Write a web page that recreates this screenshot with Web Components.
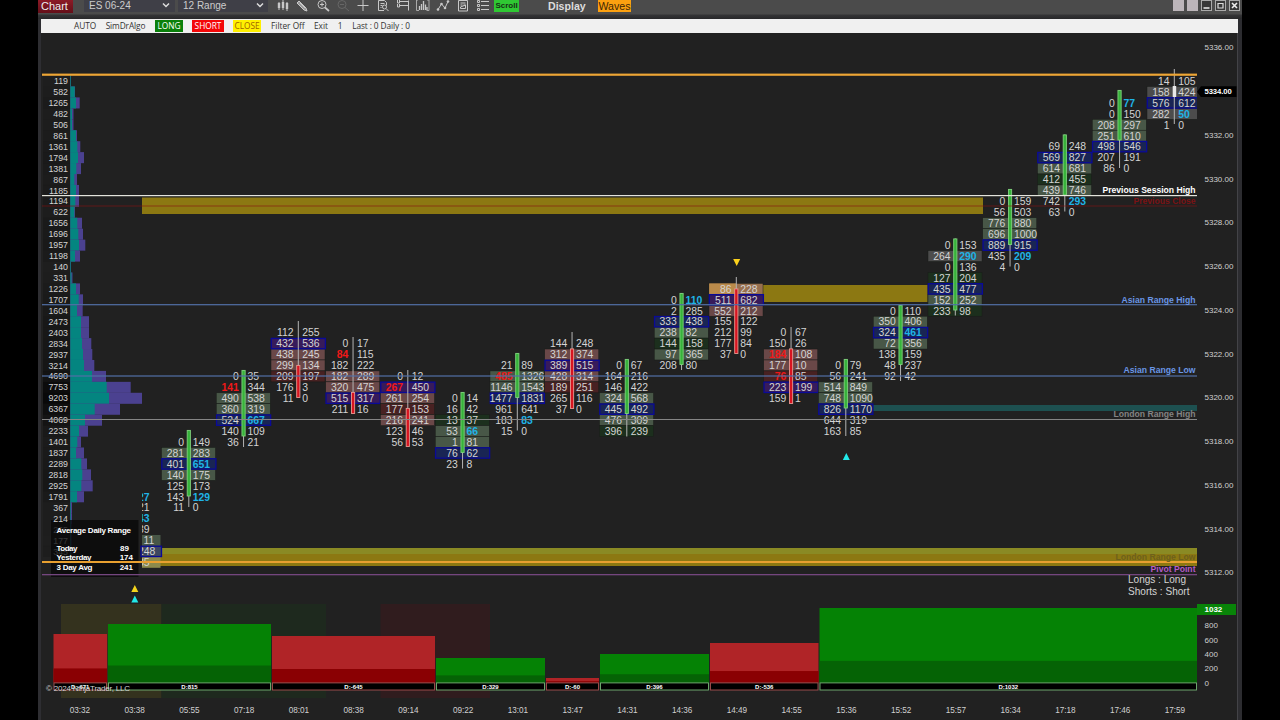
<!DOCTYPE html>
<html lang="en"><head><meta charset="utf-8"><title>Chart - ES 06-24</title>
<style>
html,body{margin:0;height:100%;background:#000;overflow:hidden}
body{font-family:"Liberation Sans",Arial,sans-serif;color:#d2d2d2}
</style></head><body>
<chart-window>
  <title-bar slot="title"></title-bar>
  <order-strip slot="orders"></order-strip>
  <footprint-chart slot="chart"></footprint-chart>
  <price-axis slot="axis"></price-axis>
  <time-axis slot="time"></time-axis>
</chart-window>
<script>
const def=(name,html,init)=>customElements.define(name,class extends HTMLElement{
  constructor(){super();this.attachShadow({mode:'open'}).innerHTML=html;if(init)init(this.shadowRoot);}
});

def('chart-window',`<style>
:host{display:grid;box-sizing:border-box;width:1204px;height:720px;margin-left:38px;background:#212121;
 grid-template-columns:1159px 41px 4px;grid-template-rows:19px 15px 666px 20px;box-shadow:inset 3px 0 #2e2e32,inset -4px 0 #2c2c30,inset -5px 0 #434347}
.wide{grid-column:1/4;min-width:0}.c{padding-left:4px}
</style><div class="wide"><slot name="title"></slot></div><div class="wide"><slot name="orders"></slot></div>
<div class="c"><slot name="chart"></slot></div><div><slot name="axis"></slot></div><i></i><div class="wide"><slot name="time"></slot></div>`);

def('tool-icon',`<style>:host{display:block;width:20px;height:12px;flex:none}svg{display:block;margin:auto}</style><svg width="14" height="12" viewBox="0 0 14 12" fill="none" stroke="#c8c8c8"></svg>`,root=>{
 const I={
 bars:'<path d="M3 2v8M7 0v10M11 2v9" stroke-width="1"/><path d="M3 3v5M7 2v6M11 3v6" stroke-width="2.4"/>',
 pencil:'<path d="M3 1l7 7 1 3-3-1-7-7z" fill="#999"/><path d="M4 3l5 5"/>',
 zin:'<circle cx="6" cy="4.5" r="4"/><path d="M9 7.500l4 3.500" stroke-width="1.700"/><path d="M4 4.500h4M6 2.500v4"/>',
 zout:'<g stroke="#676767"><circle cx="6" cy="4.500" r="4"/><path d="M9 7.500l4 3.500M4 4.500h4"/></g>',
 cross:'<path d="M7 0v11M1.500 5.500h11"/>',
 doc:'<path d="M8 10.500H2.500V.5h6l2 2v3M4.500 3.500h4M4.500 5.500h2M4.500 7.500h1"/><circle cx="8.500" cy="7" r="2"/><path d="M10 8.500l2.500 2.500"/>',
 ruler:'<path d="M12.500 10.500V.5M3 1.500h9M3 5.500h9M1.500 0v3h2V0M1.500 4v3h2V4"/>',
 hist:'<path d="M2 0H.5v10.500H3M11 0h2v10.500h-2.500" stroke="#aaa"/><path d="M3.500 10V6M5.500 10V4M7.500 10V1M9.500 10V4.500M11 10V7" stroke-width="1.300"/>',
 zig:'<path d="M2 9.500L5.500 4l3.500 4 3-6.500"/><g fill="#c8c8c8" stroke="none"><circle cx="2" cy="9.500" r="1.300"/><circle cx="5.500" cy="4" r="1.300"/><circle cx="9" cy="8" r="1.300"/><circle cx="12" cy="1.500" r="1.300"/></g>',
 props:'<path d="M2.500 .5h9v10.500h-9zM4.500 3h5M4.500 5h2M7.500 5h2v3.500h-5V7l5-2"/>',
 list:'<path d="M5 1.500h8M5 5.500h8M5 9.500h8"/><path d="M1.500 .5h2v2h-2zM1.500 4.500h2v2h-2zM1.500 8.500h2v2h-2z"/>'};
 queueMicrotask(()=>{root.querySelector('svg').innerHTML=I[root.host.getAttribute('name')]});
});

def('title-bar',`<style>
:host{display:flex;height:19px;background:linear-gradient(#4b4b4b 0 14px,#343436 15px,#28282a 19px);font-size:10.5px;line-height:12px;align-items:flex-start}
.tab{width:35px;height:13px;background:linear-gradient(#8c1a26,#640f19);color:#eee;padding-left:3px;box-sizing:border-box;font-size:11px}
.sel{display:flex;justify-content:space-between;height:12px;box-sizing:border-box;background:#3f3f47;color:#ccc;padding:0 5px;font-size:10px}
.sel svg{margin-top:2px}.icons{display:flex;margin-left:5px}
.scroll{width:25px;height:12px;margin-left:1px;background:#2fc833;color:#153015;font-weight:bold;font-size:8px;text-align:center}
.disp{font-weight:bold;font-size:10.600px;margin-left:29px;width:37px;color:#ddd}
.waves{font-size:10.600px;margin-left:13px;width:33px;background:#fba010;color:#3b2606;text-align:center}
.btns{display:flex;gap:3px;margin:0 2px 0 auto}.b{width:11px;height:11px;background:#bcb5ba}
.w{background:#383838;box-sizing:border-box;border:1px solid #aaa}.w svg{display:block}
</style><div class="tab">Chart</div>
<div class="sel" style="margin-left:11px;width:91px">ES 06-24<svg width="8" height="7" fill="none" stroke="#ddd" stroke-width="1.500"><path d="M1 1.500l3 3 3-3"/></svg></div>
<div class="sel" style="margin-left:3px;width:90px;padding-right:4px">12 Range<svg width="8" height="7" fill="none" stroke="#ddd" stroke-width="1.500"><path d="M1 1.500l3 3 3-3"/></svg></div>
<div class="icons">${['bars','pencil','zin','zout','cross','doc','ruler','hist','zig','props','list'].map(n=>`<tool-icon name="${n}"></tool-icon>`).join('')}</div>
<div class="scroll">Scroll</div><div class="disp">Display</div><div class="waves">Waves</div>
<div class="btns"><div class="b"></div><div class="b"></div>
<div class="b w"><svg width="9" height="9"><path d="M1.500 7h6" stroke="#eee" stroke-width="1.500"/></svg></div>
<div class="b w"><svg width="9" height="9"><path d="M2 2.500h5v4.500h-5z" fill="none" stroke="#ddd" stroke-width="1.200"/></svg></div>
<div class="b w"><svg width="9" height="9"><path d="M2 2l5 5M7 2l-5 5" stroke="#eee" stroke-width="1.600"/></svg></div></div>`);

def('order-strip',`<style>
:host{display:flex;align-items:center;height:14px;margin:0 4px 0 3px;background:#f0f0f0;color:#333;font:8.3px/11px "Open Sans","Noto Sans",sans-serif;white-space:nowrap}
span{flex:none;box-sizing:border-box;text-align:center;margin-right:9px;height:12px}
</style><span style="width:22px;margin-left:33px">AUTO</span><span style="width:41px;letter-spacing:-.1px">SimDrAlgo</span>
<span style="width:28px;background:#0a800a;color:#fff">LONG</span><span style="width:32px;background:#f30808;color:#fff">SHORT</span>
<span style="width:28px;background:#fff000;color:#a06000;margin-right:10px">CLOSE</span><span style="width:33px;margin-right:10px">Filter Off</span>
<span style="width:14px">Exit</span><span style="width:6px">1</span><span style="width:58px;letter-spacing:-.1px">Last : 0 Daily : 0</span>`);

def('price-axis',`<style>
:host{display:flex;flex-direction:column;height:666px;font-size:8px;color:#d0d0d0;overflow:hidden}
.p{flex:none;height:43.75px;display:flex;align-items:center}.p:first-of-type{margin-top:-7.900px}
.p span,.v span{padding-left:7.500px}.p.cur span{background:#000;color:#fff;font-weight:bold;font-size:7.700px;line-height:11px;width:32px;letter-spacing:-.1px;clip-path:polygon(0 50%,4px 0,100% 0,100% 100%,4px 100%)}
.v{height:14.350px;flex:none;display:flex;align-items:center}
.v.flag{height:11px;margin-top:9.200px;margin-bottom:3.500px;width:39px;background:#088408;color:#fff;font-weight:bold}
</style>${Array.from({length:13},(_,i)=>`<div class="p${i==1?' cur':''}"><span>${5336-2*i}.00</span></div>`).join('')}
<div class="v flag"><span>1032</span></div>${[800,600,400,200,0].map(n=>`<div class="v"><span>${n}</span></div>`).join('')}`);

def('time-axis',`<style>
:host{display:flex;height:20px;padding-left:14.500px;font-size:8.200px;color:#d0d0d0}
span{width:54.750px;flex:none;text-align:center;line-height:21px}
</style>${'03:32 03:38 05:55 07:18 08:01 08:38 09:14 09:22 13:01 13:47 14:31 14:36 14:49 14:55 15:36 15:52 15:57 16:34 17:18 17:46 17:59'.split(' ').map(t=>`<span>${t}</span>`).join('')}`);

def('footprint-chart',`<style>
:host{display:block;width:1155px;height:666px}
svg{display:block}text{font-family:"Liberation Sans",Arial,sans-serif;fill:#d4d4d4;font-size:10.400px}
.h{fill:#1fb4e8;font-weight:bold}.s{fill:#f01818;font-weight:bold}
.vp{font-size:8.800px}.lb{font-weight:bold;font-size:9px}.ad{font-weight:bold;font-size:8px;fill:#fff}.d{font-weight:bold;font-size:6px;fill:#fff}
</style><svg width="1155" height="666" viewBox="42 34 1155 666"></svg>`,root=>{
 const P=10.94,Y=i=>81+P*i;let o='';
 const rect=(x,y,x2,y2,f,e='')=>{o+=`<rect x="${x}" y="${y}" width="${+(x2-x).toFixed(2)}" height="${+(y2-y).toFixed(2)}" fill="${f}" ${e}/>`};
 const text=(x,y,t,c='',e='')=>{o+=`<text x="${x}" y="${y}" class="${c}" ${e}>${t}</text>`};
 // price zones
 rect(142,197.5,983,214,'#8c7812');rect(763,285,927.5,302,'#8c7812');rect(819,405,1197,411,'#1d5050');
 rect(142,548,1197,554,'#8a8a24');rect(142,554,1197,566,'#8c7812');
 // volume profile: label, bid edge, total edge
 const V=[[119,71,71],[582,74.700,75],[1265,76,79.700],[482,72,73.500],[506,72,73.500],[861,76,77],[1361,77.300,80.300],[1794,78,84],[1381,76.300,81],[867,74.300,77],[1185,76,79],[1194,75.300,79],[622,74.300,75],[1656,77.300,82],[1696,78.300,83],[1957,79,85.300],[1198,75,80],[140,71,71],[331,71.500,72.500],[1226,76,80],[1707,78.700,83],[1604,77,82.700],[2473,81,89],[2403,81,89],[2834,82,91.300],[2937,83,92.300],[3214,84,94.300],[4690,92,106],[7753,106.700,130.700],[9203,109,142],[6367,94.700,120],[4069,85,102],[2233,79,88],[1401,77.300,81],[1837,76,84],[2289,81.300,87],[2818,82.300,91],[2925,81.300,92.700],[1791,77,84],[367,71,72],[214,71,72],[265,71,71.500],[177,71,71.500],[345,71,71.500]];
 V.forEach(([n,a,b],i)=>{const y=Y(i)-5.47;
  rect(43,y,70,y+P+.1,'#000',`opacity="${(.08+Math.min(n/9203,1)*.65).toFixed(2)}"`);
  rect(70.3,y,b,y+P+.1,'#4b4190');rect(70.3,y,a,y+P+.1,'#048580');
  if(n!==214)text(68,Y(i)+3.1,n,'vp','text-anchor="end"')});
 // footprint columns: first row, bid/ask/shade, body colour, wick span, body span
 const C=[
 [33,'0/149 281/283g 401/651*b 140/175g 125/173 143/129* 11/0','G',430,507,430,496],
 [27,'0/35 !141/344 490/538g 360/319g 524/667*b 140/109 36/21','G',370,447,370,436],
 [23,'112/255 432/536p 438/245r 299/134r 209/197q 176/3 11/0','R',321,397,365,397.500],
 [24,'0/17 !84/115 182/222 182/289r 320/475r 515/317p 211/16','R',337,413,392,413.500],
 [27,'0/12 !267/450p 261/254r 177/153q 216/241r 123/46 56/53','R',370,446,408,446.500],
 [29,'0/14 16/42 13/37k 53/66*g 1/81g 76/62b 23/8','G',392,468.500,392,452.500],
 [26,'21/89 !485/1326g 1146/1543g 1477/1831b 961/641 183/83* 15/0','G',353,430.500,353,397.500],
 [24,'144/248 312/374r 389/515p 428/314r 189/251q 265/116 37/0','R',332,408,348.500,408.500],
 [26,'0/67 164/216 146/422 324/568g 445/492b 476/309g 396/239k','G',359,436.500,359,413.500],
 [20,'0/110* 2/285 333/438b 238/82g 144/158k 97/365g 208/80','G',293,370,293,364.500],
 [19,'86/228o 511/682p 552/212r 155/122 212/99 177/84 37/0','R',277,353,288.500,353.500],
 [23,'0/67 150/26 !184/108r 177/10r !76/85q 223/199p 159/1','R',327,403,348.500,403.500],
 [26,'0/79 56/241 514/849g 748/1090g 826/1170b 644/319 163/85','G',359,436,359,408],
 [21,'0/110 350/406g 324/461*b 72/356g 138/159 48/237 92/42','G',305,381,305,364.500],
 [15,'0/153 264/290*y 0/136 127/204k 435/477b 152/252g 233/98k','G',238.500,315.500,238.500,310],
 [11,'0/159 56/503 776/880g 696/1000g 889/915b 435/209* 4/0','G',189,266.500,189,244.500],
 [6,'69/248 569/827b 614/681g 412/455k 439/746g 742/293* 63/0','G',134.500,211.500,134.500,195],
 [2,'0/77* 0/150 208/297g 251/610g 498/546b 207/191 86/0','G',90,168,90,140],
 [0,'14/105 158/424y 576/612b 282/50*y 1/0','W',69,124,86,97]];
 const S={g:'#485747',k:'#1c2f1d',r:'#6a4848',q:'#482122',b:'#192554',p:'#371b5b',y:'#4c4c4c',o:'#98704f'};
 C.forEach(([r,d,kind,w1,w2,b1,b2],n)=>{
  const x=+(188.7+54.75*n).toFixed(2),rows=d.split(' ').map(t=>/^(!?)(\d+)\/(\d+)(\*?)(\w?)$/.exec(t));
  for(const pass of [0,1])rows.forEach((m,i)=>{const f=m[5],blue=f=='b'||f=='p';if(!f||blue!=!!pass)return;const y=Y(r+i)-5.47;
   if(blue)rect(x-26.9,y+.3,x+27.2,y+P-.3,S[f],'stroke="#0a0a98" stroke-width="1.300"');
   else{rect(x-27.2,y,x+26.800,y+P,S[f],'stroke="#191c19" stroke-width=".5"');if(f=='o')rect(x-27,y,x,y+P,'#ba8a4a')}});
  rows.forEach((m,i)=>{const y=+(Y(r+i)+3.8).toFixed(2);
   text(+(x-4.6).toFixed(2),y,m[2],m[1]?'s':'','text-anchor="end"');text(+(x+4).toFixed(2),y,m[3],m[4]?'h':'')});
  rect(x-.4,w1,x+.6,w2,'#b4b4b4');
  if(kind=='W')rect(x-1.5,b1,x+2,b2,'#e8e8e8');
  else rect(x-1.5,b1+.4,x+1.7,b2,kind=='G'?'#36b33a':'#d81420',`stroke="${kind=='G'?'#7fd07c':'#e89890'}" stroke-width=".9"`);
 });
 // partly hidden first column
 rect(142,Y(42)-5.5,160.5,Y(43)-5.5,S.g);rect(142,Y(44)-5.5,160.5,Y(45)-5.5,'#8c8a4c');
 rect(141,Y(43)-5.2,161.500,Y(44)-5.8,'#3d4760','stroke="#0a0a98" stroke-width="1.300"');
 o+='<clipPath id="c"><rect x="142" y="480" width="30" height="100"/></clipPath><g clip-path="url(#c)">';
 [['27','h'],['21',''],['43','h'],['39','']].forEach(([t,c],i)=>text(138,Y(38+i)+3.8,t,c));
 text(143.500,Y(42)+3.8,'11');text(138,Y(43)+3.8,'248');text(138,Y(44)+3.8,'35');o+='</g>';
 // average daily range panel
 rect(51,520,138.500,577,'#080808','opacity=".78"');
 text(68,Y(40)+3.1,214,'vp','text-anchor="end"');
 text(56.5,533.2,'Average Daily Range','ad','textLength="74.500"');
 [['Today',89,551.200,21,129],['Yesterday',174,560.300,35,133],['3 Day Avg',241,570,36,133]].forEach(([a,b,y,w,e])=>{text(56.5,y,a,'ad',`textLength="${w}"`);text(e,y,b,'ad','text-anchor="end"')});
 // reference levels
 rect(42,73.600,1197,75.800,'#eda535');rect(42,195,1197,196.200,'#e4e4dc');rect(42,205.500,1197,206.500,'#8b1010','opacity=".6"');
 rect(42,304.100,1197,305.300,'#526fa6');rect(42,375.400,1197,376.600,'#526fa6');rect(42,419,1197,420,'#858585');
 rect(42,561,1197,563,'#e8a030');rect(42,574,1197,575.300,'#74467f');
 [['Previous Session High',192.800,'#fff',93],['Previous Close',203.800,'#7c1214',62],['Asian Range High',302.500,'#6a96e6',74],['Asian Range Low',373.300,'#6a96e6',72],['London Range High',416.800,'#838383',82],['London Range Low',559.500,'#6e601c',80],['Pivot Point',572,'#b45cc8',45]].forEach(([t,y,c,w])=>text(1195.5-w,y,t,'lb',`textLength="${w}" lengthAdjust="spacingAndGlyphs" style="fill:${c}"`));
 text(1128,582.700,'Longs : Long','','textLength="58" lengthAdjust="spacingAndGlyphs"');text(1128,594.700,'Shorts : Short','','textLength="61.500" lengthAdjust="spacingAndGlyphs"');
 // signal arrows
 const tri=(x,y,h,c)=>{o+=`<path d="M${x-3.5} ${y}h7l-3.500 ${h}z" fill="${c}"/>`};
 tri(134.8,592,-7,'#f4d41c');tri(134.8,602.500,-7,'#22e8e8');tri(736.700,259,7,'#fcd21c');tri(846.300,460,-7,'#22e8e8');
 // delta waves
 rect(61,604,161.500,698,'#34321e');rect(161.500,604,326,698,'#1e291e');rect(380.500,604,490,698,'#301c1e');
 [[53.500,107,634,0,'D:-671'],[108,271,624,1,'D:815'],[272,435,636,0,'D:-645'],[436,545,658,1,'D:329'],[546,599,678,0,'D:-60'],[600,709,654,1,'D:396'],[710,818.500,643,0,'D:-536'],[819.500,1197,608,1,'D:1032']].forEach(([a,b,y,g,t])=>{
  rect(a,y,b,682.500,g?'#058205':'#b02427');rect(a,682.500-(682.500-y)*.29,b,682.500,g?'#056305':'#8a0003');
  rect(a+.5,682.900,b-.5,690,'#000',`stroke="${g?'#75b575':'#a85050'}" stroke-width=".9"`);
  text((a+b)/2,688.600,t,'d','text-anchor="middle"')});
 text(46,690.800,'© 2024 NinjaTrader, LLC','','style="font-size:8px" textLength="84"');
 root.querySelector('svg').innerHTML=o;
});
</script></body></html>
